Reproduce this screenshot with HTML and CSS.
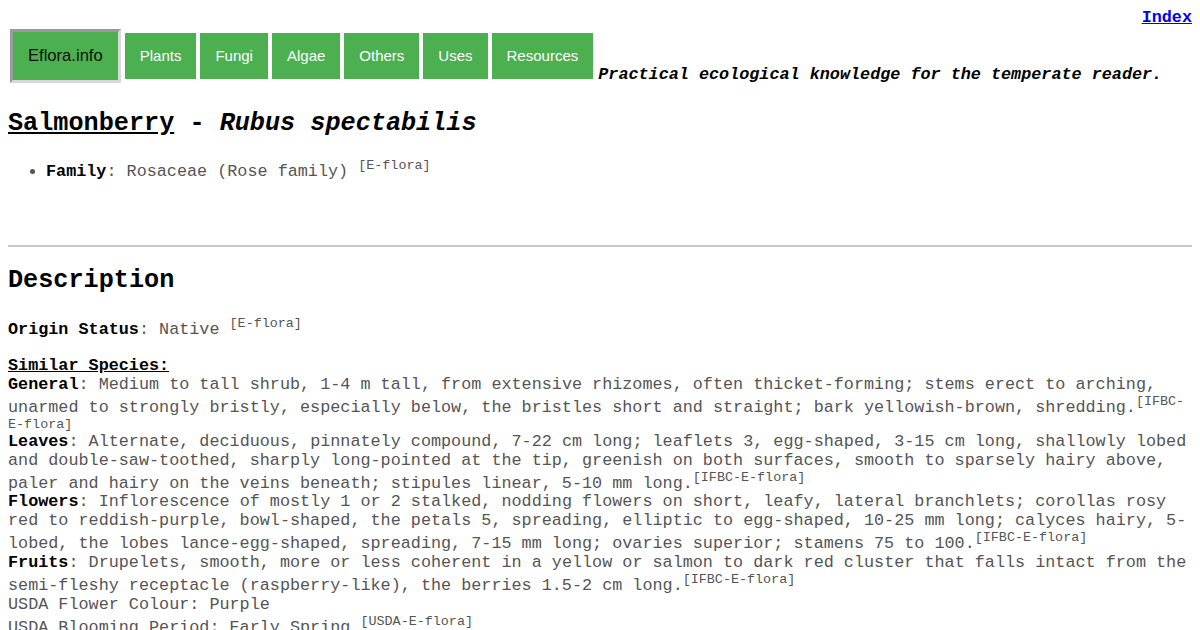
FILE: index.html
```
<html lang="en">
<head>
<meta charset="utf-8">
<title>Salmonberry - Rubus spectabilis</title>
<link rel="stylesheet" href="styles.css">
</head>
<body>
<div class="index"><a href="#">Index</a></div>
<div class="topbar">
  <nav class="nav">
    <a class="btn brand" href="#">Eflora.info</a>
    <a class="btn" href="#">Plants</a>
    <a class="btn" href="#">Fungi</a>
    <a class="btn" href="#">Algae</a>
    <a class="btn" href="#">Others</a>
    <a class="btn" href="#">Uses</a>
    <a class="btn" href="#">Resources</a>
  </nav>
  <span class="tagline">Practical ecological knowledge for the temperate reader.</span>
</div>
<h1 class="title"><a href="#">Salmonberry</a> - <i>Rubus spectabilis</i></h1>
<ul class="facts">
  <li><b>Family</b>: Rosaceae (Rose family) <sup>[E-flora]</sup></li>
</ul>
<hr class="rule">
<h2 class="section">Description</h2>
<p class="origin"><b>Origin Status</b>: Native <sup>[E-flora]</sup></p>
<div class="similar">
  <div class="sub">Similar Species:</div>
  <div><b>General</b>: Medium to tall shrub, 1-4 m tall, from extensive rhizomes, often thicket-forming; stems erect to arching, unarmed to strongly bristly, especially below, the bristles short and straight; bark yellowish-brown, shredding.<sup>[IFBC-E-flora]</sup></div>
  <div><b>Leaves</b>: Alternate, deciduous, pinnately compound, 7-22 cm long; leaflets 3, egg-shaped, 3-15 cm long, shallowly lobed and double-saw-toothed, sharply long-pointed at the tip, greenish on both surfaces, smooth to sparsely hairy above, paler and hairy on the veins beneath; stipules linear, 5-10 mm long.<sup>[IFBC-E-flora]</sup></div>
  <div><b>Flowers</b>: Inflorescence of mostly 1 or 2 stalked, nodding flowers on short, leafy, lateral branchlets; corollas rosy red to reddish-purple, bowl-shaped, the petals 5, spreading, elliptic to egg-shaped, 10-25 mm long; calyces hairy, 5-lobed, the lobes lance-egg-shaped, spreading, 7-15 mm long; ovaries superior; stamens 75 to 100.<sup>[IFBC-E-flora]</sup></div>
  <div><b>Fruits</b>: Drupelets, smooth, more or less coherent in a yellow or salmon to dark red cluster that falls intact from the semi-fleshy receptacle (raspberry-like), the berries 1.5-2 cm long.<sup>[IFBC-E-flora]</sup></div>
  <div>USDA Flower Colour: Purple</div>
  <div>USDA Blooming Period: Early Spring <sup>[USDA-E-flora]</sup></div>
</div>
</body>
</html>
```
FILE: styles.css
```
html, body {
  background: #fff;
}
body {
  margin: 8px;
  font-family: "Liberation Mono", "Courier New", monospace;
  font-size: 16.8px;
  color: #555;
}
b {
  color: #000;
}
sup {
  font-size: 13.4px;
}
.index {
  text-align: right;
}
.index a {
  color: #0000ee;
  font-weight: bold;
  text-decoration: underline;
}
.topbar {
  display: flex;
  align-items: center;
  margin-top: 2px;
}
.nav {
  display: flex;
  align-items: center;
  gap: 4px;
  margin-left: 2px;
}
.btn {
  display: block;
  background: #4caf50;
  color: #fff;
  text-decoration: none;
  font-family: "Liberation Sans", Arial, sans-serif;
  font-size: 15px;
  padding: 14px 15px;
  line-height: 18px;
}
.brand {
  font-size: 16.6px;
  line-height: 20px;
  color: #111;
  border: 3px solid;
  border-color: #9a9a9a #d8d8d8 #d8d8d8 #9a9a9a;
}
.tagline {
  align-self: flex-end;
  margin-left: 5px;
  margin-bottom: -1px;
  font-weight: bold;
  font-style: italic;
  color: #000;
}
.title {
  margin: 26px 0 0;
  font-size: 25.2px;
  font-weight: bold;
  color: #000;
}
.title a {
  color: #000;
  text-decoration: underline;
}
.facts {
  margin: 20px 0 0;
  padding-left: 38px;
}
.rule {
  margin: 64px 0 0;
  border: 0;
  border-top: 2px solid #c8c8c8;
  height: 0;
}
.section {
  margin: 19px 0 0;
  font-size: 25.2px;
  color: #000;
}
.origin {
  margin: 21px 0 0;
}
.similar {
  margin-top: 18px;
}
.sub {
  font-weight: bold;
  color: #000;
  text-decoration: underline;
}
```
